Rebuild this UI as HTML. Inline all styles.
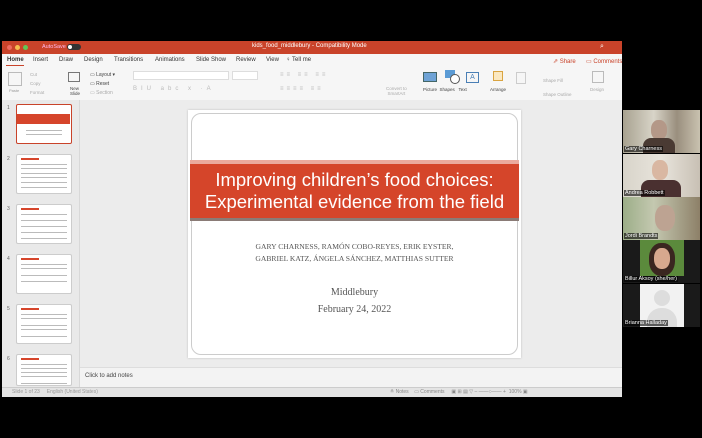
<!DOCTYPE html>
<html><head><style>
*{margin:0;padding:0;box-sizing:border-box}
body{width:702px;height:438px;background:#000;position:relative;overflow:hidden;font-family:"Liberation Sans",sans-serif}
.a{position:absolute}
.t{font-size:6px;color:#333}
.thumb{position:absolute;left:16px;width:56px;height:40px;background:#fff;border:1px solid #ccc;border-radius:2px}
.thumb .h{position:absolute;left:4px;top:3px;width:18px;height:2px;background:#d6452b}
.thumb .l{position:absolute;left:4px;height:1px;background:#bbb;width:46px}
.num{position:absolute;left:7px;font-size:5px;color:#666}
.tile{position:absolute;left:623px;width:77px;height:43px;overflow:hidden}
.tile span{position:absolute;left:1px;bottom:1px;font-size:5.5px;color:#fff;background:rgba(0,0,0,.6);padding:0 1px}
</style></head><body>
<!-- title bar -->
<div class="a" style="left:2px;top:41px;width:620px;height:13px;background:#c9432a"></div>
<div class="a" style="left:7px;top:45px;width:5px;height:5px;border-radius:50%;background:#ee6a5f"></div>
<div class="a" style="left:15px;top:45px;width:5px;height:5px;border-radius:50%;background:#f5be4f"></div>
<div class="a" style="left:23px;top:45px;width:5px;height:5px;border-radius:50%;background:#62c655"></div>
<div class="a" style="left:42px;top:44px;font-size:5.5px;color:#fbe">AutoSave</div>
<div class="a" style="left:67px;top:44px;width:14px;height:6px;border-radius:3px;background:#333"></div>
<div class="a" style="left:68px;top:45px;width:4px;height:4px;border-radius:50%;background:#fff"></div>
<div class="a" style="left:252px;top:43px;font-size:6px;color:#fff">kids_food_middlebury - Compatibility Mode</div>
<div class="a" style="left:600px;top:43px;font-size:7px;color:#fff">⌕</div>
<!-- tabs -->
<div class="a" style="left:2px;top:54px;width:620px;height:46px;background:#f6f6f6"></div>
<div class="a t" style="left:7px;top:57px;font-weight:bold">Home</div>
<div class="a" style="left:6px;top:65px;width:18px;height:1px;background:#c9432a"></div>
<div class="a t" style="left:33px;top:57px">Insert</div>
<div class="a t" style="left:59px;top:57px">Draw</div>
<div class="a t" style="left:84px;top:57px">Design</div>
<div class="a t" style="left:114px;top:57px">Transitions</div>
<div class="a t" style="left:155px;top:57px">Animations</div>
<div class="a t" style="left:196px;top:57px">Slide Show</div>
<div class="a t" style="left:236px;top:57px">Review</div>
<div class="a t" style="left:266px;top:57px">View</div>
<div class="a t" style="left:286px;top:57px">♀ Tell me</div>
<div class="a t" style="left:553px;top:58px;color:#c9432a">⇗ Share</div>
<div class="a t" style="left:586px;top:58px;color:#c9432a">▭ Comments</div>
<!-- ribbon content -->
<div class="a" style="left:8px;top:72px;width:14px;height:14px;border:1px solid #bbb"></div>
<div class="a" style="font-size:4px;color:#999;left:9px;top:88px">Paste</div>
<div class="a" style="font-size:4.5px;color:#aaa;left:30px;top:70px;line-height:9px">Cut<br>Copy<br>Format</div>
<div class="a" style="left:68px;top:72px;width:12px;height:10px;border:1px solid #777"></div>
<div class="a" style="font-size:4.5px;color:#444;left:70px;top:86px;line-height:5px">New<br>Slide</div>
<div class="a" style="font-size:5px;color:#444;left:90px;top:71px;line-height:9px">▭ Layout ▾<br>▭ Reset<br><span style="color:#aaa">▭ Section</span></div>
<div class="a" style="left:133px;top:71px;width:96px;height:9px;background:#fff;border:1px solid #ddd"></div>
<div class="a" style="left:232px;top:71px;width:26px;height:9px;background:#fff;border:1px solid #ddd"></div>
<div class="a" style="font-size:6px;color:#bbb;left:133px;top:86px;letter-spacing:4px">BIU abc x ·A</div>
<div class="a" style="font-size:6px;color:#bbb;left:280px;top:72px;letter-spacing:3px">≡≡ ≡≡ ≡≡</div>
<div class="a" style="font-size:6px;color:#bbb;left:280px;top:86px;letter-spacing:3px">≡≡≡≡ ≡≡</div>
<div class="a" style="font-size:4.5px;color:#aaa;left:386px;top:86px;text-align:center;line-height:5px">Convert to<br>SmartArt</div>
<div class="a" style="left:423px;top:72px;width:14px;height:10px;background:#6fa3d6;border:1px solid #466"></div>
<div class="a" style="left:445px;top:70px;width:10px;height:8px;background:#5b9bd5"></div>
<div class="a" style="left:450px;top:74px;width:10px;height:10px;border-radius:50%;border:1px solid #555;background:#fff"></div>
<div class="a" style="left:466px;top:72px;width:13px;height:11px;border:1px solid #4a7fb5;font-size:7px;color:#4a7fb5;text-align:center;line-height:10px">A</div>
<div class="a" style="font-size:4.5px;color:#444;left:423px;top:87px">Picture&nbsp;&nbsp;Shapes&nbsp;&nbsp; Text</div>
<div class="a" style="left:493px;top:71px;width:10px;height:10px;border:1px solid #d9a441;background:#fbe8c0"></div>
<div class="a" style="font-size:4.5px;color:#444;left:490px;top:87px">Arrange</div>
<div class="a" style="left:516px;top:72px;width:10px;height:12px;border:1px solid #ccc"></div>
<div class="a" style="font-size:4.5px;color:#aaa;left:543px;top:74px;line-height:14px">Shape Fill<br>Shape Outline</div>
<div class="a" style="left:592px;top:71px;width:12px;height:12px;border:1px solid #bbb"></div>
<div class="a" style="font-size:4.5px;color:#aaa;left:590px;top:87px">Design</div>
<!-- thumbnails panel -->
<div class="a" style="left:2px;top:100px;width:78px;height:287px;background:#e9e9e9;border-right:1px solid #d8d8d8"></div>
<div class="a" style="left:80px;top:100px;width:542px;height:267px;background:#ececec"></div>
<div class="num" style="top:105px">1</div>
<div class="thumb" style="top:104px;border:1.5px solid #c9432a">
 <div class="a" style="left:0;top:9px;width:53px;height:10px;background:#d6452b"></div>
 <div class="l" style="top:25px;width:36px;left:9px"></div><div class="l" style="top:29px;width:36px;left:9px"></div>
</div>
<div class="num" style="top:156px">2</div>
<div class="thumb" style="top:154px"><div class="h"></div><div class="l" style="top:9px"></div><div class="l" style="top:13px"></div><div class="l" style="top:18px"></div><div class="l" style="top:22px"></div><div class="l" style="top:27px"></div><div class="l" style="top:32px"></div></div>
<div class="num" style="top:206px">3</div>
<div class="thumb" style="top:204px"><div class="h"></div><div class="l" style="top:9px"></div><div class="l" style="top:15px"></div><div class="l" style="top:21px"></div><div class="l" style="top:27px"></div><div class="l" style="top:33px"></div></div>
<div class="num" style="top:256px">4</div>
<div class="thumb" style="top:254px"><div class="h"></div><div class="l" style="top:9px"></div><div class="l" style="top:13px"></div><div class="l" style="top:20px"></div><div class="l" style="top:26px"></div></div>
<div class="num" style="top:306px">5</div>
<div class="thumb" style="top:304px"><div class="h"></div><div class="l" style="top:9px"></div><div class="l" style="top:13px"></div><div class="l" style="top:20px"></div><div class="l" style="top:24px"></div><div class="l" style="top:31px"></div></div>
<div class="num" style="top:356px">6</div>
<div class="thumb" style="top:354px;height:32px"><div class="h"></div><div class="l" style="top:9px"></div><div class="l" style="top:13px"></div><div class="l" style="top:17px"></div><div class="l" style="top:21px"></div><div class="l" style="top:28px"></div></div>
<!-- slide -->
<div class="a" style="left:188px;top:110px;width:333px;height:248px;background:#fff;box-shadow:0 0 2px #bbb"></div>
<div class="a" style="left:191px;top:113px;width:327px;height:242px;border:1px solid #ccc;border-radius:10px"></div>
<div class="a" style="left:190px;top:160px;width:329px;height:5px;background:#eba99c"></div>
<div class="a" style="left:190px;top:164px;width:329px;height:54px;background:#d5452a"></div>
<div class="a" style="left:190px;top:218px;width:329px;height:3px;background:#8a7b76"></div>
<div class="a" style="left:190px;top:169px;width:329px;text-align:center;color:#fff;font-size:18.5px;line-height:22px">Improving children’s food choices:<br>Experimental evidence from the field</div>
<div class="a" style="left:190px;top:241px;width:329px;text-align:center;color:#555;font-family:'Liberation Serif',serif;font-size:7.6px;line-height:12px">GARY CHARNESS, RAMÓN COBO-REYES, ERIK EYSTER,<br>GABRIEL KATZ, ÁNGELA SÁNCHEZ, MATTHIAS SUTTER</div>
<div class="a" style="left:190px;top:284px;width:329px;text-align:center;color:#555;font-family:'Liberation Serif',serif;font-size:10px;line-height:17px">Middlebury<br>February 24, 2022</div>
<!-- notes -->
<div class="a" style="left:80px;top:367px;width:542px;height:20px;background:#f3f3f3;border-top:1px solid #ddd"></div>
<div class="a t" style="left:85px;top:373px;color:#444">Click to add notes</div>
<!-- status -->
<div class="a" style="left:2px;top:387px;width:620px;height:10px;background:#e4e4e4;border-top:1px solid #ccc"></div>
<div class="a" style="left:12px;top:389px;font-size:5px;color:#999">Slide 1 of 23&nbsp;&nbsp;&nbsp;&nbsp; English (United States)</div>
<div class="a" style="left:390px;top:389px;font-size:5px;color:#888">≙ Notes &nbsp;&nbsp; ▭ Comments &nbsp;&nbsp;&nbsp; ▣ ⊞ ▤ ▽ – ——○—— + &nbsp;100% ▣</div>
<!-- zoom tiles -->
<div class="tile" style="top:110px;background:linear-gradient(90deg,#a8a290,#d8d4c8 40%,#9a8f7e 70%,#c9c2b0)"><div class="a" style="left:28px;top:10px;width:16px;height:20px;border-radius:45%;background:#b49888"></div><div class="a" style="left:20px;top:28px;width:32px;height:15px;background:#4a3a33;border-radius:8px 8px 0 0"></div><span>Gary Charness</span></div>
<div class="tile" style="top:154px;background:linear-gradient(90deg,#d8d4ca,#e8e4dc 50%,#c8c0b4)"><div class="a" style="left:29px;top:6px;width:16px;height:20px;border-radius:45%;background:#d9b7a2"></div><div class="a" style="left:18px;top:26px;width:40px;height:17px;background:#4a3030;border-radius:8px 8px 0 0"></div><span>Andrea Robbett</span></div>
<div class="tile" style="top:197px;background:linear-gradient(90deg,#9cae88,#c4c8b0 40%,#8d8068)"><div class="a" style="left:32px;top:8px;width:20px;height:26px;border-radius:45%;background:#bda392"></div><span>Jordi Brandts</span></div>
<div class="tile" style="top:240px;background:#1a1a1a"><div class="a" style="left:17px;top:0;width:44px;height:36px;background:#5b8a3c"></div><div class="a" style="left:26px;top:3px;width:26px;height:33px;border-radius:45%;background:#3a2620"></div><div class="a" style="left:31px;top:8px;width:16px;height:21px;border-radius:45%;background:#d7a88e"></div><span>Billur Aksoy (she/her)</span></div>
<div class="tile" style="top:284px;background:#1a1a1a"><div class="a" style="left:17px;top:0;width:44px;height:43px;background:#f2f2f2"></div><div class="a" style="left:31px;top:6px;width:16px;height:16px;border-radius:50%;background:#ddd"></div><div class="a" style="left:24px;top:24px;width:30px;height:19px;border-radius:14px 14px 0 0;background:#ddd"></div><span>Brianna Halladay</span></div>
</body></html>
